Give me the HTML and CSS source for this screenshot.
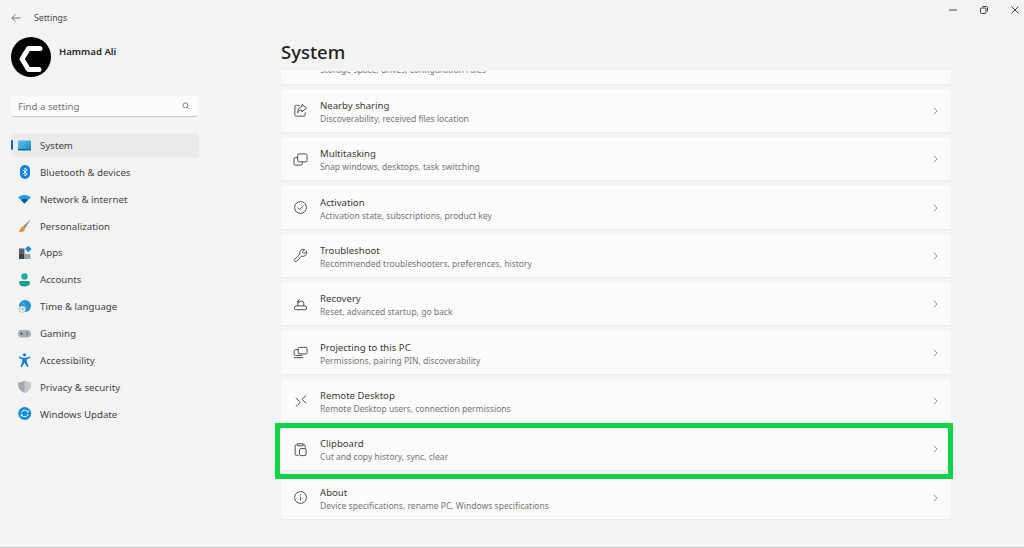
FILE: index.html
```html
<!DOCTYPE html>
<html lang="en">
<head>
<meta charset="utf-8">
<title>Settings</title>
<link rel="stylesheet" href="styles.css">
</head>
<body>
<div class="window">
  <aside class="sidebar">
    <div class="titlebar">
      <svg class="back" viewBox="0 0 10 10"><path d="M9.5 5H.8M4.4 1.4.8 5l3.6 3.6"/></svg>
      <span>Settings</span>
    </div>
    <div class="profile">
      <svg class="avatar" viewBox="0 0 40 40"><circle cx="20" cy="20" r="20" fill="#000"/><path d="M29 11.500H17.500L11 22 17.500 32.500H28" fill="none" stroke="#fff" stroke-width="5" stroke-linejoin="round" stroke-linecap="round"/></svg>
      <span class="name">Hammad Ali</span>
    </div>
    <div class="search">
      <span>Find a setting</span>
      <svg viewBox="0 0 10 10"><circle cx="4.200" cy="4.200" r="3"/><path d="M6.400 6.400 9 9"/></svg>
    </div>
    <nav class="nav">
      <a class="nav-item active">
        <svg class="nav-icon" viewBox="0 0 14 14"><defs><linearGradient id="sys" x1="0" y1="0" x2="1" y2="1"><stop offset="0" stop-color="#5cc4e8"/><stop offset="1" stop-color="#1b8fc9"/></linearGradient></defs><rect y="1.500" width="13" height="9" rx=".6" fill="url(#sys)"/><rect x="0" y="10" width="13" height="1.500" fill="#1a6a9c"/></svg>
        <span>System</span>
      </a>
      <a class="nav-item">
        <svg class="nav-icon" viewBox="0 0 14 14"><rect x="2" y="0" width="10" height="14" rx="5" fill="#0d82e0"/><path d="M4.700 4.700 9.200 9 7 11V3L9.200 5 4.700 9.300" fill="none" stroke="#fff" stroke-width=".9"/></svg>
        <span>Bluetooth &amp; devices</span>
      </a>
      <a class="nav-item">
        <svg class="nav-icon" viewBox="0 0 14 14"><path d="M0 5.200Q6.500.8 13 5.200L6.500 11.500Z" fill="#1a9fe6"/><path d="M3.200 8Q6.500 5.700 9.800 8L6.500 11.500Z" fill="#0b4f8f"/></svg>
        <span>Network &amp; internet</span>
      </a>
      <a class="nav-item">
        <svg class="nav-icon" viewBox="0 0 14 14"><path d="M13 0 5 7.500 7 9.500Z" fill="#8a8f96"/><path d="M4.500 7.500C2.500 8 3 11 .5 12.500 3.500 13.500 7 12.500 7 9.700Z" fill="#f08a2c"/></svg>
        <span>Personalization</span>
      </a>
      <a class="nav-item">
        <svg class="nav-icon" viewBox="0 0 14 14"><rect x="1" y="2.500" width="5.500" height="5.500" fill="#55606b"/><rect x="1" y="8" width="5.500" height="5" fill="#3d454e"/><rect x="6.500" y="8" width="6" height="5" fill="#9aa2aa"/><rect x="8" y=".8" width="4.600" height="4.600" transform="rotate(45 10.300 3.100)" fill="#1688dc"/></svg>
        <span>Apps</span>
      </a>
      <a class="nav-item">
        <svg class="nav-icon" viewBox="0 0 14 14"><circle cx="6.500" cy="3.500" r="3.200" fill="#21ac9e"/><path d="M1 9.500Q1 8 2.500 8H10.500Q12 8 12 9.500 12 13.500 6.500 13.500 1 13.500 1 9.500Z" fill="#19a08f"/></svg>
        <span>Accounts</span>
      </a>
      <a class="nav-item">
        <svg class="nav-icon" viewBox="0 0 14 14"><circle cx="7" cy="6" r="6" fill="#1b93d6"/><path d="M4 2Q7 3 6.500 6 9 6 9 9" fill="#8fd8ee"/><circle cx="4.200" cy="9.300" r="3.400" fill="#e3e6e9" stroke="#a9b0b6" stroke-width=".5"/><path d="M4.200 7.700V9.500H5.600" fill="none" stroke="#666" stroke-width=".6"/></svg>
        <span>Time &amp; language</span>
      </a>
      <a class="nav-item">
        <svg class="nav-icon" viewBox="0 0 14 14"><rect y="3" width="13" height="7.500" rx="3.700" fill="#a7adb3"/><circle cx="3.500" cy="6.700" r="1.100" fill="#4b5258"/><circle cx="9.200" cy="5.800" r=".8" fill="#2a7fc9"/><circle cx="9.200" cy="7.800" r=".8" fill="#2a7fc9"/></svg>
        <span>Gaming</span>
      </a>
      <a class="nav-item">
        <svg class="nav-icon" viewBox="0 0 14 14"><circle cx="6.500" cy="1.800" r="1.600" fill="#0f7fd8"/><path d="M1 3.500 5 4.800H8L12 3.500 12.500 4.800 8.700 6.500V8.500L10.500 13.500 9 14 6.500 9.500 4 14 2.500 13.500 4.300 8.500V6.500L.5 4.800Z" fill="#0f7fd8"/></svg>
        <span>Accessibility</span>
      </a>
      <a class="nav-item">
        <svg class="nav-icon" viewBox="0 0 14 14"><path d="M6.500.5Q9.500 2.500 13 2.500 13.500 10 6.500 13 -.5 10 0 2.500 3.500 2.500 6.500.5Z" fill="#a3abb2"/><path d="M6.500.5Q9.500 2.500 13 2.500 13.500 10 6.500 13Z" fill="#c2c8cd"/></svg>
        <span>Privacy &amp; security</span>
      </a>
      <a class="nav-item">
        <svg class="nav-icon" viewBox="0 0 14 14"><circle cx="6.700" cy="6.500" r="6.500" fill="#0f8bdc"/><path d="M3.200 5.800A3.700 3.700 0 0 1 9.800 4.800M10.200 7.200A3.700 3.700 0 0 1 3.600 8.200" fill="none" stroke="#fff" stroke-width="1"/><path d="M10.600 3V5.400H8.200ZM2.800 10V7.600H5.200Z" fill="#fff"/></svg>
        <span>Windows Update</span>
      </a>
    </nav>
  </aside>

  <main class="main">
    <div class="controls">
      <svg viewBox="0 0 10 10"><path d="M1 5H9"/></svg>
      <svg viewBox="0 0 10 10"><rect x="1.500" y="3" width="5.500" height="5.500" rx="1"/><path d="M3.500 1.500H7.500Q8.500 1.500 8.500 2.500V6.500"/></svg>
      <svg viewBox="0 0 10 10"><path d="M1.500 1.500 8.500 8.500M8.500 1.500 1.500 8.500"/></svg>
    </div>
    <h1 class="page-title">System</h1>
    <div class="scroller">
      <ul class="cards">
        <li class="card card-partial">
          <div class="card-text"><div class="card-sub">Storage space, drives, configuration rules</div></div>
        </li>
        <li class="card">
          <svg class="card-icon" viewBox="0 0 16 16"><path d="M7 2.500H3.500A1.500 1.500 0 0 0 2 4V12.500A1.500 1.500 0 0 0 3.500 14H11.500A1.500 1.500 0 0 0 13 12.500V10"/><path d="M9.500 1.500 14.500 5.500 9.500 9.500V7.500C7.500 7.500 6 8.500 5 10.500 5 7 6.500 4 9.500 3.800Z"/></svg>
          <div class="card-text"><div class="card-title">Nearby sharing</div><div class="card-sub">Discoverability, received files location</div></div>
          <svg class="chev" viewBox="0 0 6 10"><path d="M1 1 5 5 1 9"/></svg>
        </li>
        <li class="card">
          <svg class="card-icon" viewBox="0 0 16 16"><rect x="5" y="2" width="10" height="8.500" rx="1.500"/><path d="M5 6H2.500A1.500 1.500 0 0 0 1 7.500V12.500A1.500 1.500 0 0 0 2.500 14H8.500A1.500 1.500 0 0 0 10 12.500V10.500"/></svg>
          <div class="card-text"><div class="card-title">Multitasking</div><div class="card-sub">Snap windows, desktops, task switching</div></div>
          <svg class="chev" viewBox="0 0 6 10"><path d="M1 1 5 5 1 9"/></svg>
        </li>
        <li class="card">
          <svg class="card-icon" viewBox="0 0 16 16"><circle cx="8" cy="8" r="6.300"/><path d="M5 8.300 7.200 10.300 11 6"/></svg>
          <div class="card-text"><div class="card-title">Activation</div><div class="card-sub">Activation state, subscriptions, product key</div></div>
          <svg class="chev" viewBox="0 0 6 10"><path d="M1 1 5 5 1 9"/></svg>
        </li>
        <li class="card">
          <svg class="card-icon" viewBox="0 0 16 16"><path d="M14.300 3.500 11.700 6 10 4.300 12.500 1.700A4 4 0 0 0 7.300 6.800L1.800 12.200A1.400 1.400 0 0 0 3.800 14.200L9.200 8.700A4 4 0 0 0 14.300 3.500Z"/></svg>
          <div class="card-text"><div class="card-title">Troubleshoot</div><div class="card-sub">Recommended troubleshooters, preferences, history</div></div>
          <svg class="chev" viewBox="0 0 6 10"><path d="M1 1 5 5 1 9"/></svg>
        </li>
        <li class="card">
          <svg class="card-icon" viewBox="0 0 16 16"><rect x="1.500" y="9.500" width="13" height="4" rx="2"/><path d="M5 9.500V4.500H9.500Q11.500 4.500 11.500 6.500V9.500M7 2.500 5 4.500 7 6.500"/></svg>
          <div class="card-text"><div class="card-title">Recovery</div><div class="card-sub">Reset, advanced startup, go back</div></div>
          <svg class="chev" viewBox="0 0 6 10"><path d="M1 1 5 5 1 9"/></svg>
        </li>
        <li class="card">
          <svg class="card-icon" viewBox="0 0 16 16"><rect x="5.500" y="2.500" width="9.500" height="7" rx="1.200"/><path d="M5.500 5H2.500A1.300 1.300 0 0 0 1.200 6.300V9.700A1.300 1.300 0 0 0 2.500 11H10M1 13.500H11"/></svg>
          <div class="card-text"><div class="card-title">Projecting to this PC</div><div class="card-sub">Permissions, pairing PIN, discoverability</div></div>
          <svg class="chev" viewBox="0 0 6 10"><path d="M1 1 5 5 1 9"/></svg>
        </li>
        <li class="card">
          <svg class="card-icon" viewBox="0 0 16 16"><path d="M3 5 7.800 10 3 14.500M14.200 2.500 9.500 6.700 14.200 11"/></svg>
          <div class="card-text"><div class="card-title">Remote Desktop</div><div class="card-sub">Remote Desktop users, connection permissions</div></div>
          <svg class="chev" viewBox="0 0 6 10"><path d="M1 1 5 5 1 9"/></svg>
        </li>
        <li class="card">
          <svg class="card-icon" viewBox="0 0 16 16"><path d="M5 3H3.500A1.200 1.200 0 0 0 2.300 4.200V13A1.200 1.200 0 0 0 3.500 14.200H6M10.500 3H12A1.200 1.200 0 0 1 13 4.200V6M5 1.800H10.500V4H5Z"/><rect x="7" y="7" width="7" height="7.500" rx="1.200"/></svg>
          <div class="card-text"><div class="card-title">Clipboard</div><div class="card-sub">Cut and copy history, sync, clear</div></div>
          <svg class="chev" viewBox="0 0 6 10"><path d="M1 1 5 5 1 9"/></svg>
        </li>
        <li class="card">
          <svg class="card-icon" viewBox="0 0 16 16"><circle cx="8" cy="8" r="6.300"/><path d="M8 7.200V11.300M8 4.600V5.800"/></svg>
          <div class="card-text"><div class="card-title">About</div><div class="card-sub">Device specifications, rename PC, Windows specifications</div></div>
          <svg class="chev" viewBox="0 0 6 10"><path d="M1 1 5 5 1 9"/></svg>
        </li>
      </ul>
    </div>
    <div class="highlight"></div>
  </main>
</div>
</body>
</html>
```

FILE: styles.css
```css
* { box-sizing: border-box; }
html, body { margin: 0; height: 100%; overflow: hidden; }
body {
  background: #f3f3f3;
  color: #2b2b2b;
  font-family: "Noto Sans", "Open Sans", sans-serif;
}
.window {
  display: flex;
  height: 548px;
  border-bottom: 1px solid #c9c9c9;
}

/* sidebar */
.sidebar {
  width: 281px;
  flex: none;
  padding-left: 11px;
}
.titlebar {
  display: flex;
  align-items: center;
  height: 12px;
  margin-top: 12px;
  font-size: 8.7px;
  color: #4a4a4a;
}
.back {
  width: 10px;
  height: 10px;
  margin-right: 13px;
  fill: none;
  stroke: #777;
  stroke-width: 1;
}
.profile {
  display: flex;
  align-items: flex-start;
  gap: 8px;
  margin-top: 13px;
}
.avatar { width: 40px; height: 40px; flex: none; }
.name {
  margin-top: 8px;
  font-size: 9.6px;
  font-weight: 600;
  line-height: 14px;
  color: #262626;
}
.search {
  display: flex;
  align-items: center;
  justify-content: space-between;
  width: 187px;
  height: 21px;
  margin-top: 19px;
  padding: 0 8px 0 7px;
  background: #fbfbfb;
  border-radius: 3px;
  border-bottom: 1px solid #c4c4c4;
  font-size: 9.7px;
  color: #757575;
}
.search svg {
  width: 8px;
  height: 8px;
  fill: none;
  stroke: #666;
  stroke-width: 1;
}
.nav {
  display: flex;
  flex-direction: column;
  gap: 2.86px;
  width: 188px;
  margin-top: 16px;
}
.nav-item {
  position: relative;
  display: flex;
  align-items: center;
  height: 24px;
  padding: 1px 0 0 7px;
  border-radius: 3px;
  font-size: 9.7px;
  color: #444;
}
.nav-item.active { background: #eaeaea; }
.nav-item.active::before {
  content: "";
  position: absolute;
  left: 0;
  top: 7px;
  width: 2px;
  height: 10px;
  border-radius: 1px;
  background: #0067c0;
}
.nav-icon { width: 14px; height: 14px; flex: none; margin-right: 8px; }

/* main */
.main {
  position: relative;
  flex: 1;
  min-width: 0;
}
.controls {
  position: absolute;
  top: 5px;
  right: 4px;
  display: flex;
  gap: 21px;
}
.controls svg {
  width: 10px;
  height: 10px;
  fill: none;
  stroke: #444;
  stroke-width: 1;
}
.page-title {
  margin: 0;
  padding-top: 37.5px;
  height: 71px;
  font-size: 18.5px;
  font-weight: 500;
  line-height: 28px;
  color: #222;
}
.scroller {
  width: 670px;
  height: 476px;
  overflow: hidden;
}
.cards {
  list-style: none;
  margin: -30.5px 0 0;
  padding: 0;
  display: flex;
  flex-direction: column;
  gap: 4px;
}
.card {
  display: flex;
  align-items: center;
  height: 44.33px;
  padding: 0 12px 0 11px;
  background: #fbfbfb;
  border: 1px solid #f8f8f8;
  border-bottom-color: #ebebeb;
  border-radius: 3px;
}
.card-partial { align-items: flex-end; padding: 0 12px 7px 39px; }
.card-icon {
  width: 15px;
  height: 15px;
  flex: none;
  margin-right: 13px;
  fill: none;
  stroke: #444;
  stroke-width: 1;
}
.card-text { flex: 1; min-width: 0; padding-top: 3px; margin-left: -1px; }
.card-partial .card-text { padding-top: 0; }
.card-title {
  font-size: 9.6px;
  line-height: 13px;
  margin-bottom: 1px;
  color: #3a3a3a;
}
.card-sub {
  font-size: 8.55px;
  line-height: 13px;
  color: #767676;
}
.chev {
  width: 5px;
  height: 8px;
  flex: none;
  fill: none;
  stroke: #777;
  stroke-width: 1;
}
.highlight {
  position: absolute;
  left: -6px;
  top: 423px;
  width: 678px;
  height: 56px;
  border: 5px solid #10d347;
}
```
